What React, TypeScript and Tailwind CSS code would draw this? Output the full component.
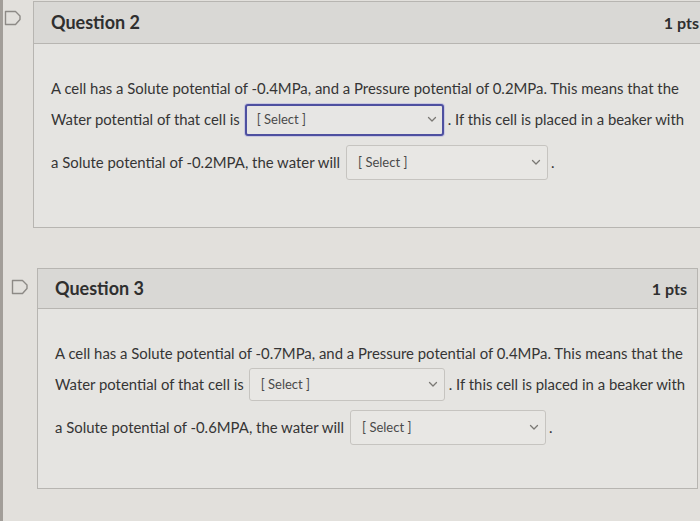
const Flag = () => (
  <svg width="18" height="16" viewBox="0 0 18 16" fill="none">
    <path d="M1.5 1.5 H11.5 L16 6 V9.5 L11.5 14.5 H1.5 Z" stroke="#8d8a86" strokeWidth="1.4" strokeLinejoin="round" />
  </svg>
)

const Chevron = () => (
  <svg width="10" height="7" viewBox="0 0 10 7" fill="none">
    <path d="M1.5 1.5 L5 5 L8.5 1.5" stroke="#7a7874" strokeWidth="1.3" strokeLinecap="round" strokeLinejoin="round" />
  </svg>
)

const Select = ({ focused, w, h }: { focused?: boolean; w: number; h: number }) => (
  <div
    className={
      focused
        ? 'flex items-center justify-between rounded-[3px] border-2 border-[#4e50a0] bg-[#e7e6e4] pl-[10px] pr-[5px] shadow-[0_0_0_1px_#c9c8e0]'
        : 'flex items-center justify-between rounded-[3px] border border-[#c6c4c0] bg-[#e8e7e4] pl-[11px] pr-[6px]'
    }
    style={{ width: w, height: h }}
  >
    <span className="text-[13px] text-[#4a4a4a]">[ Select ]</span>
    <Chevron />
  </div>
)

type Q = {
  num: number
  solute: string
  pressure: string
  outside: string
}

const Question = ({ q, flagPad, right, first }: { q: Q; flagPad: string; right: string; first?: boolean }) => (
  <div className="flex">
    <div className={`${flagPad} shrink-0`}>
      <Flag />
    </div>
    <div className={`flex-1 border border-[#b7b5b1] ${right}`}>
      <div
        className={`flex items-center justify-between border-b border-[#b7b5b1] bg-[#d9d8d5] pl-[17px] pr-[10px] ${
          first ? 'h-[42px]' : 'h-[40px]'
        }`}
      >
        <span className="text-[18px] font-bold text-[#2f2f2f]">Question {q.num}</span>
        <span className="text-[16px] font-bold text-[#2f2f2f]">1 pts</span>
      </div>
      <div className={`bg-[#e5e4e1] pl-[17px] pt-[29px] text-[14.9px] text-[#353535] ${first ? 'pb-[47px]' : 'pb-[43px]'}`}>
        <div className="flex h-[31px] items-center whitespace-nowrap">
          A cell has a Solute potential of {q.solute}, and a Pressure potential of {q.pressure}. This means that the
        </div>
        <div className="flex h-[31px] items-center whitespace-nowrap">
          <span>Water potential of that cell is</span>
          <div className="ml-[5px] mr-[4px]">
            <Select focused={first} w={first ? 199 : 196} h={first ? 32 : 33} />
          </div>
          <span>. If this cell is placed in a beaker with</span>
        </div>
        <div className="mt-[10px] flex h-[35px] items-center whitespace-nowrap">
          <span>a Solute potential of {q.outside}, the water will</span>
          <div className="ml-[6px] mr-[3px]">
            <Select w={first ? 202 : 196} h={35} />
          </div>
          <span>.</span>
        </div>
      </div>
    </div>
  </div>
)

export default function App() {
  const questions: Q[] = [
    { num: 2, solute: '-0.4MPa', pressure: '0.2MPa', outside: '-0.2MPA' },
    { num: 3, solute: '-0.7MPa', pressure: '0.4MPa', outside: '-0.6MPA' },
  ]

  return (
    <div className="h-[521px] w-[700px] overflow-hidden border-l-[3px] border-[#a29e99] bg-[#e2e0dc] pt-[1px] font-['Lato',sans-serif]">
      <Question q={questions[0]} flagPad="w-[30px] pt-[9px] pl-[1px]" right="-mr-[10px]" first />
      <div className="mt-[40px]">
        <Question q={questions[1]} flagPad="w-[34px] pt-[11px] pl-[8px]" right="mr-[2px]" />
      </div>
    </div>
  )
}
